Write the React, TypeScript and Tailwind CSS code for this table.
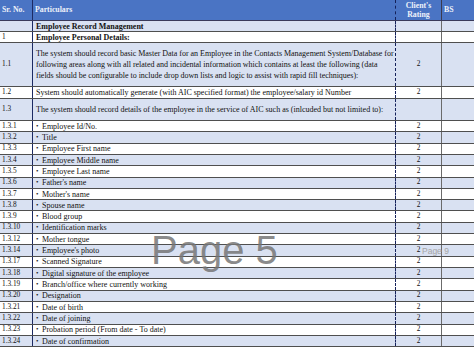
import React from "react";

type RowProps = {
  sr: string;
  children: React.ReactNode;
  rating?: string;
  shaded: boolean;
  h: string;
  bold?: boolean;
};

const Row = ({ sr, children, rating, shaded, h, bold }: RowProps) => {
  const bg = shaded ? "bg-[#d9e1f2]" : "bg-white";
  return (
    <div className={`flex ${h} ${bg} border-b border-[#4f4f4f]`}>
      <div className="w-[33px] shrink-0 border-r border-[#1c2a63] flex items-center pl-[2px] text-[7.3px]">
        {sr}
      </div>
      <div
        className={`w-[363px] shrink-0 border-r border-dashed border-[#14215a] flex items-center pl-[3px] leading-[11px] whitespace-nowrap ${
          bold ? "font-bold" : ""
        }`}
      >
        {children}
      </div>
      <div className="w-[46px] shrink-0 border-r border-[#6b6b6b] flex items-center justify-center text-[7.3px]">
        {rating}
      </div>
      <div className="flex-1" />
    </div>
  );
};

const Bullet = ({ text }: { text: string }) => (
  <span className="flex items-center">
    <span className="w-[6px] text-[7px]">•</span>
    <span>{text}</span>
  </span>
);

const items: [string, string][] = [
  ["1.3.1", "Employee Id/No."],
  ["1.3.2", "Title"],
  ["1.3.3", "Employee First name"],
  ["1.3.4", "Employee Middle name"],
  ["1.3.5", "Employee Last name"],
  ["1.3.6", "Father's name"],
  ["1.3.7", "Mother's name"],
  ["1.3.8", "Spouse name"],
  ["1.3.9", "Blood group"],
  ["1.3.10", "Identification marks"],
  ["1.3.12", "Mother tongue"],
  ["1.3.14", "Employee's photo"],
  ["1.3.17", "Scanned Signature"],
  ["1.3.18", "Digital signature of the employee"],
  ["1.3.19", "Branch/office where currently working"],
  ["1.3.20", "Designation"],
  ["1.3.21", "Date of birth"],
  ["1.3.22", "Date of joining"],
  ["1.3.23", "Probation period (From date - To date)"],
  ["1.3.24", "Date of confirmation"],
];

export default function App() {
  return (
    <div
      className="relative w-[474px] h-[348px] overflow-hidden bg-white text-[#111] text-[8px]"
      style={{ fontFamily: '"Liberation Serif", "Times New Roman", serif' }}
    >
      {/* header */}
      <div className="flex h-[21px] bg-[#4a74c4] text-[#eef2fa] font-bold text-[7.8px] border-b border-[#3a3a5a]">
        <div className="w-[33px] shrink-0 border-r border-[#1c2a63] flex items-center pl-[2px]">
          Sr. No.
        </div>
        <div className="w-[363px] shrink-0 border-r border-dashed border-[#14215a] flex items-center pl-[2px]">
          Particulars
        </div>
        <div className="w-[46px] shrink-0 border-r border-[#3b3b4f] flex flex-col items-center justify-center leading-[9.5px]">
          <span>Client's</span>
          <span>Rating</span>
        </div>
        <div className="flex-1 flex items-center pl-[2px]">BS</div>
      </div>

      <Row sr="" shaded h="h-[11px]" bold>
        Employee Record Management
      </Row>
      <Row sr="1" shaded={false} h="h-[11.3px]" bold>
        Employee Personal Details:
      </Row>
      <Row sr="1.1" rating="2" shaded h="h-[44px]">
        <span className="tracking-[-0.02px]">
          The system should record basic Master Data for an Employee in the Contacts Management System/Database for
          <br />
          following areas along with all related and incidental information which contains at least the following (data
          <br />
          fields should be configurable to include drop down lists and logic to assist with rapid fill techniques):
        </span>
      </Row>
      <Row sr="1.2" rating="2" shaded={false} h="h-[11.7px]">
        System should automatically generate (with AIC specified format) the employee/salary id Number
      </Row>
      <Row sr="1.3" shaded h="h-[22px]">
        The system should record details of the employee in the service of AIC such as (inlcuded but not limited to):
      </Row>
      {items.map(([sr, text], i) => (
        <Row key={sr} sr={sr} rating="2" shaded={i % 2 === 1} h="h-[11.32px]">
          <Bullet text={text} />
        </Row>
      ))}

      {/* watermarks */}
      <div
        className="absolute left-[151px] top-[230px] text-[40px] leading-none text-[#767676]/85 pointer-events-none"
        style={{ fontFamily: '"Liberation Sans", Arial, sans-serif' }}
      >
        Page 5
      </div>
      <div
        className="absolute left-[422px] top-[247px] text-[8.5px] leading-none text-[#a5a5a5] pointer-events-none"
        style={{ fontFamily: '"Liberation Sans", Arial, sans-serif' }}
      >
        Page 9
      </div>
    </div>
  );
}
